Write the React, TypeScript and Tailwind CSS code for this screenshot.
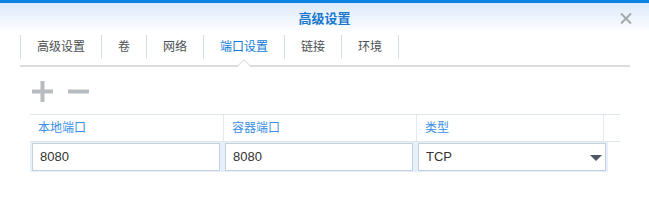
import React from "react";

const tabs = ["高级设置", "卷", "网络", "端口设置", "链接", "环境"];

export default function App() {
  return (
    <div className="w-[649px] h-[212px] bg-white overflow-hidden font-['Liberation_Sans','Noto_Sans_CJK_SC',sans-serif]">
      <div className="h-[3px] bg-[#0a84e0]" />
      <div className="relative h-[30px] bg-gradient-to-b from-[#dbeafa] to-white flex items-center justify-center">
        <span className="text-[13px] font-bold text-[#1a78cf] leading-none">高级设置</span>
        <svg className="absolute left-[620px] top-[10px]" width="12" height="11" viewBox="0 0 12 11">
          <path d="M1 0.5 L11 10.5 M11 0.5 L1 10.5" stroke="#a3a8ad" strokeWidth="2" fill="none" />
        </svg>
      </div>
      <div className="ml-[20px] w-[610px] pt-[2px] pb-[6px] border-b-2 border-[#dcdcdc] flex">
        {tabs.map((t, i) => (
          <div
            key={t}
            className={`relative h-[24px] px-4 flex items-center border-l border-[#d6dee6] text-[12px] leading-none ${
              i === tabs.length - 1 ? "border-r" : ""
            } ${i === 3 ? "text-[#0f7ad8]" : "text-[#4b4f54]"}`}
          >
            {t}
            {i === 3 && (
              <svg className="absolute left-1/2 -translate-x-1/2 top-[24px]" width="14" height="8" viewBox="0 0 14 8">
                <path d="M0 8 L7 1 L14 8 Z" fill="white" />
                <path d="M0 7.5 L7 0.8 L14 7.5" stroke="#d6d6d6" strokeWidth="1" fill="none" />
              </svg>
            )}
          </div>
        ))}
      </div>
      <div className="ml-[32px] mt-[14px] flex gap-[15px] items-center">
        <svg width="21" height="21" viewBox="0 0 21 21">
          <rect x="0" y="8.5" width="21" height="4" fill="#b8bcc1" />
          <rect x="8.5" y="0" width="4" height="21" fill="#b8bcc1" />
        </svg>
        <svg width="21" height="21" viewBox="0 0 21 21">
          <rect x="0" y="8.5" width="21" height="4" fill="#b8bcc1" />
        </svg>
      </div>
      <div className="ml-[30px] mt-[12px] w-[590px]">
        <div className="flex h-[28px] border-t border-b border-[#dde5ed] text-[12px] text-[#3a8ee4]">
          <div className="w-[193px] pl-[8px] flex items-center">本地端口</div>
          <div className="w-[193px] pl-[8px] flex items-center border-l border-[#e2e9f0]">容器端口</div>
          <div className="w-[187px] pl-[8px] flex items-center border-l border-[#e2e9f0]">类型</div>
          <div className="flex-1 border-l border-[#e2e9f0]" />
        </div>
        <div className="w-[578px] bg-[#e6f0fa] px-[2px] py-[1px] flex gap-[5px] text-[13px] text-[#333]">
          <div className="w-[188px] h-[28px] bg-white border border-[#c6d0da] pl-[7px] flex items-center">8080</div>
          <div className="w-[188px] h-[28px] bg-white border border-[#c6d0da] pl-[7px] flex items-center">8080</div>
          <div className="relative w-[188px] h-[28px] bg-white border border-[#c6d0da] pl-[7px] flex items-center">
            TCP
            <svg className="absolute right-[3px] top-[11px]" width="12" height="6" viewBox="0 0 12 6">
              <path d="M0 0 L12 0 L6 6 Z" fill="#4f5862" />
            </svg>
          </div>
        </div>
      </div>
    </div>
  );
}
